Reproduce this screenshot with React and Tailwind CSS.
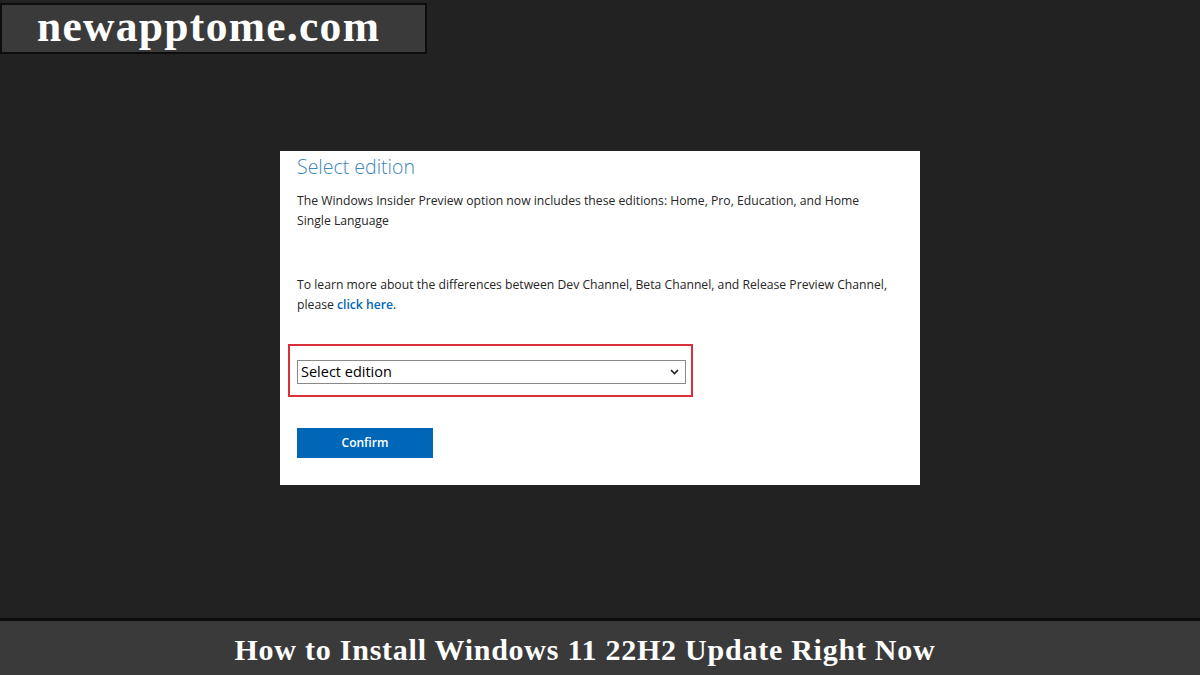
export default function App() {
  return (
    <div className="w-[1200px] h-[675px] bg-[#222222] flex flex-col overflow-hidden">
      <div className="h-[151px] relative">
        <div className="absolute left-0 top-[3px] w-[427px] h-[51px] bg-[#3a3a3a] border-2 border-[#0d0d0d] flex items-center pl-[35px] pb-[4px]">
          <span className="text-white font-bold text-[43.5px] leading-none tracking-[1.3px] font-['Liberation_Serif',serif]">
            newapptome.com
          </span>
        </div>
      </div>

      <div className="flex-1 flex flex-col items-center">
        <div className="w-[640px] h-[334px] bg-white pl-[17px] pr-[18px] pt-[1px] font-['Open_Sans','Noto_Sans',sans-serif] text-[#262626]">
          <h1 className="text-[#3a86b8] text-[19.5px] font-light leading-[30px]">Select edition</h1>
          <p className="mt-[9px] text-[12.2px] leading-[20px]">
            The Windows Insider Preview option now includes these editions: Home, Pro, Education, and Home
            <br />
            Single Language
          </p>
          <p className="mt-[44px] text-[12.2px] leading-[20px]">
            To learn more about the differences between Dev Channel, Beta Channel, and Release Preview Channel,
            <br />
            please <a className="text-[#0067b8] font-semibold">click here</a>.
          </p>
          <div className="mt-[29px] -ml-[9px] w-[405px] h-[53px] border-2 border-[#d9303c] flex items-center pl-[7px] pt-[2px]">
            <div className="w-[389px] h-[24px] border border-[#8a8a8a] flex items-center justify-between pl-[3px] pr-[6px]">
              <span className="text-[14.5px] text-black">Select edition</span>
              <svg width="9" height="6" viewBox="0 0 9 6">
                <path d="M1 1l3.5 3.5L8 1" fill="none" stroke="#222" strokeWidth="1.6" />
              </svg>
            </div>
          </div>
          <button className="mt-[31px] w-[136px] h-[30px] bg-[#0067b8] text-white text-[12px] font-semibold">
            Confirm
          </button>
        </div>
      </div>

      <div className="h-[57px] bg-[#3a3a3a] border-t-[3px] border-[#0d0d0d] flex items-center justify-center pr-[30px] pt-[4px]">
        <span className="text-white font-bold text-[30px] leading-none tracking-[0.75px] font-['Liberation_Serif',serif]">
          How to Install Windows 11 22H2 Update Right Now
        </span>
      </div>
    </div>
  );
}
